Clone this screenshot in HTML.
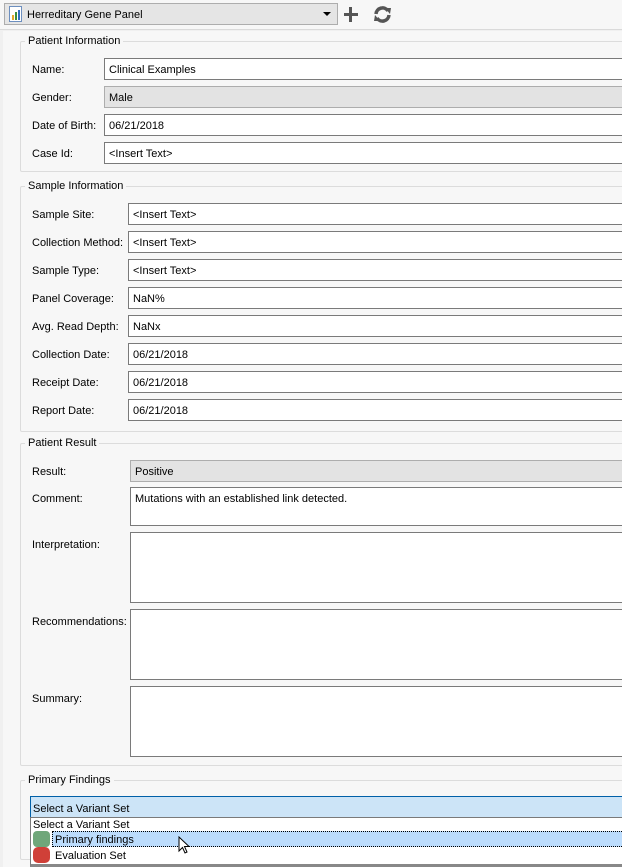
<!DOCTYPE html>
<html style="overflow:hidden;height:867px"><head><style>
*{box-sizing:border-box}
body{margin:0;width:622px;height:867px;overflow:hidden;background:#f0f0f0;font-family:"Liberation Sans",Tahoma,sans-serif;font-size:11px;color:#000;position:relative}
.a{position:absolute}
.fs{position:absolute;left:20px;width:640px;border:1px solid #dcdcdc;border-radius:2px}
.lg{position:absolute;background:#f7f7f7;padding:0 3px;font-size:11px}
.lb{position:absolute;font-size:11px}
.in{position:absolute;right:-10px;border:1px solid #7a7a7a;background:#fff;padding:4px 4px 2px;font-size:11px;height:22px;line-height:14px}
.g{background:#e3e3e3;border-color:#adadad}
</style></head><body>
<div class="a" style="left:0;top:0;width:622px;height:30px;background:#f7f7f7;border-bottom:1px solid #dadada"></div>
<div class="a" style="left:4px;top:3px;width:334px;height:22px;border:1px solid #adadad;background:#e5e5e5"></div>
<svg class="a" style="left:8px;top:6px" width="15" height="16" viewBox="0 0 15 16"><rect x="1.5" y="0.5" width="12" height="15" fill="#fff" stroke="#6d8fbf"/><rect x="4" y="9" width="2" height="5" fill="#e3a82b"/><rect x="7" y="6" width="2" height="8" fill="#3c8f3c"/><rect x="10" y="4" width="2" height="10" fill="#2f6fc0"/></svg>
<div class="a" style="left:27px;top:9px;font-size:11px">Herreditary Gene Panel</div>
<div class="a" style="left:323px;top:12px;width:0;height:0;border-left:4px solid transparent;border-right:4px solid transparent;border-top:4px solid #000"></div>
<div class="a" style="left:344px;top:13px;width:14px;height:3px;background:#555"></div>
<div class="a" style="left:349px;top:7px;width:3px;height:15px;background:#555"></div>
<svg class="a" style="left:373px;top:5px" width="19" height="19" viewBox="0 0 19 19"><path d="M3 9 A6.5 6.5 0 0 1 15 6" fill="none" stroke="#555" stroke-width="3.5"/><path d="M16 10 A6.5 6.5 0 0 1 4 13" fill="none" stroke="#555" stroke-width="3.5"/><path d="M12 3 L18 3 L17 9Z" fill="#555"/><path d="M7 16 L1 16 L2 10Z" fill="#555"/></svg>
<div class="a" style="left:0;top:31px;width:622px;height:836px;background:#f7f7f7;border-left:3px solid #f0f0f0"></div>

<div class="fs" style="top:41px;height:131px"><span class="lg" style="left:4px;top:-7px">Patient Information</span></div>
<div class="lb" style="left:32px;top:64px">Name:</div><div class="in" style="left:104px;top:58px">Clinical Examples</div>
<div class="lb" style="left:32px;top:92px">Gender:</div><div class="in g" style="left:104px;top:86px">Male</div>
<div class="lb" style="left:32px;top:120px">Date of Birth:</div><div class="in" style="left:104px;top:114px">06/21/2018</div>
<div class="lb" style="left:32px;top:148px">Case Id:</div><div class="in" style="left:104px;top:142px">&lt;Insert Text&gt;</div>

<div class="fs" style="top:186px;height:246px"><span class="lg" style="left:4px;top:-7px">Sample Information</span></div>
<div class="lb" style="left:32px;top:209px">Sample Site:</div><div class="in" style="left:128px;top:203px">&lt;Insert Text&gt;</div>
<div class="lb" style="left:32px;top:237px">Collection Method:</div><div class="in" style="left:128px;top:231px">&lt;Insert Text&gt;</div>
<div class="lb" style="left:32px;top:265px">Sample Type:</div><div class="in" style="left:128px;top:259px">&lt;Insert Text&gt;</div>
<div class="lb" style="left:32px;top:293px">Panel Coverage:</div><div class="in" style="left:128px;top:287px">NaN%</div>
<div class="lb" style="left:32px;top:321px">Avg. Read Depth:</div><div class="in" style="left:128px;top:315px">NaNx</div>
<div class="lb" style="left:32px;top:349px">Collection Date:</div><div class="in" style="left:128px;top:343px">06/21/2018</div>
<div class="lb" style="left:32px;top:377px">Receipt Date:</div><div class="in" style="left:128px;top:371px">06/21/2018</div>
<div class="lb" style="left:32px;top:405px">Report Date:</div><div class="in" style="left:128px;top:399px">06/21/2018</div>

<div class="fs" style="top:443px;height:323px"><span class="lg" style="left:4px;top:-7px">Patient Result</span></div>
<div class="lb" style="left:32px;top:466px">Result:</div><div class="in g" style="left:130px;top:460px">Positive</div>
<div class="lb" style="left:32px;top:493px">Comment:</div><div class="in" style="left:130px;top:487px;height:39px">Mutations with an established link detected.</div>
<div class="lb" style="left:32px;top:539px">Interpretation:</div><div class="in" style="left:130px;top:532px;height:71px"></div>
<div class="lb" style="left:32px;top:616px">Recommendations:</div><div class="in" style="left:130px;top:609px;height:71px"></div>
<div class="lb" style="left:32px;top:693px">Summary:</div><div class="in" style="left:130px;top:686px;height:71px"></div>

<div class="fs" style="top:780px;height:80px"><span class="lg" style="left:4px;top:-7px">Primary Findings</span></div>
<div class="in" style="left:30px;top:796px;background:#cce4f7;border-color:#0060a8;height:22px;padding:5px 2px 0">Select a Variant Set</div>
<div class="a" style="left:30px;top:817px;width:600px;height:50px;background:#fff;border:1px solid #7a7a7a;border-bottom:3px solid #888"></div>
<div class="a" style="left:33px;top:819px">Select a Variant Set</div>
<div class="a" style="left:52px;top:831px;width:580px;height:16px;background:#bcdcfc;border:1px dotted #000"></div>
<div class="a" style="left:33px;top:831px;width:17px;height:16px;background:#6fa77a;border-radius:4px"></div>
<div class="a" style="left:33px;top:847px;width:17px;height:16px;background:#d04038;border-radius:5px"></div>
<div class="a" style="left:55px;top:834px">Primary findings</div>
<div class="a" style="left:55px;top:850px">Evaluation Set</div>
<svg class="a" style="left:178px;top:836px" width="14" height="20" viewBox="0 0 14 20"><path d="M1 1 L1 15 L4.5 11.5 L7 17 L9 16 L6.5 10.5 L11 10.5Z" fill="#fff" stroke="#000"/></svg>
</body></html>
